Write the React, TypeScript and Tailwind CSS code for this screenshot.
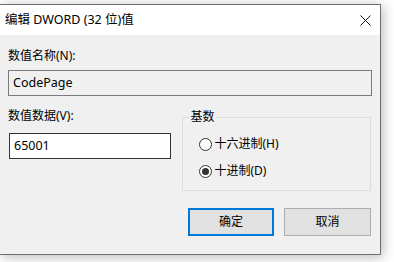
import React from 'react';

const font = { fontFamily: '"Noto Sans", "Noto Sans CJK SC", sans-serif' };

const Radio = ({ checked, label }: { checked?: boolean; label: string }) => (
  <div className="flex items-center h-[16px] ml-[10px]">
    <span className="w-[13px] h-[13px] rounded-full border border-[#333] bg-white flex items-center justify-center">
      {checked && <span className="w-[7px] h-[7px] rounded-full bg-[#333]" />}
    </span>
    <span className="ml-[3px] text-[12px] text-black leading-[16px]">{label}</span>
  </div>
);

export default function App() {
  return (
    <div className="w-[394px] h-[262px] bg-white overflow-hidden pt-[4px]" style={font}>
      <div className="w-[381px] h-[251px] border-t border-r border-b border-[#6e6e6e] bg-[#f0f0f0] flex flex-col shadow-[2px_2px_12px_rgba(0,0,0,0.28)]">
        {/* title bar */}
        <div className="h-[30px] bg-white flex items-center justify-between pl-[5px] pr-[9px]">
          <span className="text-[12.5px] text-black leading-[16px] -mt-[1px]">编辑 DWORD (32 位)值</span>
          <svg width="11" height="11" viewBox="0 0 11 11">
            <path d="M0.5 0.5L10.5 10.5M10.5 0.5L0.5 10.5" stroke="#111" strokeWidth="1" />
          </svg>
        </div>

        {/* body */}
        <div className="flex-1 pl-[8px] pr-[9px] text-[12px] text-black">
          <div className="mt-[13px] leading-[16px]">数值名称(N):</div>
          <div className="mt-[6px] w-[364px] h-[26px] border border-[#7a7a7a] bg-[#f0f0f0] flex items-center pl-[4px] text-[12.5px]">
            CodePage
          </div>

          <div className="mt-[12px] flex">
            <div className="w-[174px]">
              <div className="leading-[16px]">数值数据(V):</div>
              <div className="mt-[9px] ml-[1px] w-[162px] h-[26px] border border-[#333] bg-white flex items-center pl-[4px] text-[12.5px]">
                65001
              </div>
            </div>
            <fieldset className="mt-[1px] w-[190px] h-[82px] border border-[#dcdcdc] pl-[6px] pr-[6px]">
              <legend className="px-[2px] leading-[16px] text-[12px]">基数</legend>
              <div className="mt-[11px]">
                <Radio label="十六进制(H)" />
              </div>
              <div className="mt-[11px]">
                <Radio checked label="十进制(D)" />
              </div>
            </fieldset>
          </div>

          <div className="mt-[17px] flex justify-end gap-[10px]">
            <button className="w-[86px] h-[28px] border-2 border-[#0078d7] bg-[#e1e1e1] text-[12px] text-black">确定</button>
            <button className="w-[87px] h-[28px] border border-[#adadad] bg-[#e1e1e1] text-[12px] text-black">取消</button>
          </div>
        </div>
      </div>
    </div>
  );
}
